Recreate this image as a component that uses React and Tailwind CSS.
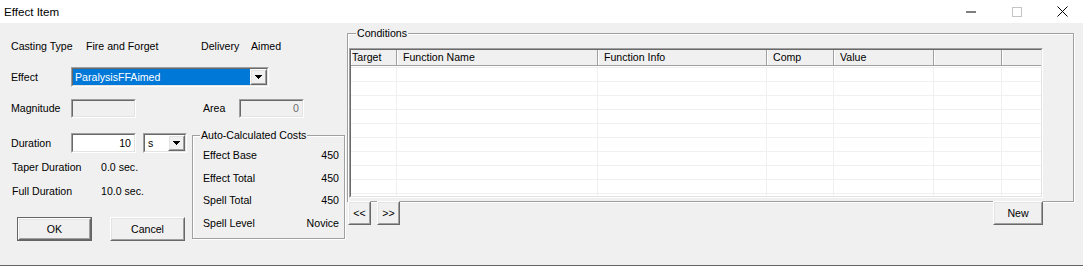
import React from "react";

const sunkenOuter = "border border-t-[#a0a0a0] border-l-[#a0a0a0] border-b-white border-r-white";
const sunkenInner = "border border-t-[#696969] border-l-[#696969] border-b-[#e3e3e3] border-r-[#e3e3e3]";
const raisedOuter = "border border-t-white border-l-white border-b-[#696969] border-r-[#696969]";
const raisedInner = "border border-t-[#e3e3e3] border-l-[#e3e3e3] border-b-[#a0a0a0] border-r-[#a0a0a0]";

function Arrow() {
  return (
    <svg width="7" height="4" viewBox="0 0 7 4" shapeRendering="crispEdges">
      <path d="M0 0h7v1h-1v1h-1v1h-1v1h-1v-1h-1v-1h-1v-1h-1z" fill="#000" />
    </svg>
  );
}

function DropBtn() {
  return (
    <div className={`w-[17px] h-full bg-[#f0f0f0] ${raisedOuter}`}>
      <div className={`w-full h-full flex items-center justify-center ${raisedInner}`}>
        <Arrow />
      </div>
    </div>
  );
}

function Sunken({ className = "", innerClass = "", children }) {
  return (
    <div className={`${sunkenOuter} ${className}`}>
      <div className={`w-full h-full ${sunkenInner} ${innerClass}`}>{children}</div>
    </div>
  );
}

function Button({ className = "", children, isDefault }) {
  const btn = (
    <div className={`w-full h-full bg-[#f0f0f0] ${raisedOuter}`}>
      <div className={`w-full h-full flex items-center justify-center ${raisedInner}`}>{children}</div>
    </div>
  );
  if (isDefault) {
    return <div className={`border border-[#646464] ${className}`}>{btn}</div>;
  }
  return <div className={className}>{btn}</div>;
}

function GroupBox({ title, className = "", legendLeft = "left-[7px]", children }) {
  return (
    <div className={`relative border border-[#a0a0a0] shadow-[1px_1px_0_white,inset_1px_1px_0_white] ${className}`}>
      <span className={`absolute top-[-7px] ${legendLeft} bg-[#f0f0f0] px-[1px] leading-[13px]`}>{title}</span>
      {children}
    </div>
  );
}

const cols = "grid grid-cols-[46px_201px_169px_67px_100px_68px_1fr]";

export default function App() {
  const headers = ["Target", "Function Name", "Function Info", "Comp", "Value", "", ""];
  const rows = Array.from({ length: 10 });
  return (
    <div className="w-[1083px] h-[266px] bg-[#f0f0f0] flex flex-col overflow-hidden text-[10.6px] leading-[13px] text-black [font-family:'Liberation_Sans',Arial,sans-serif]">
      {/* Title bar */}
      <div className="h-[23px] bg-white flex items-center shrink-0">
        <span className="ml-[4px] text-[11.6px] leading-[15px] text-black">Effect Item</span>
        <div className="ml-auto mr-[15px] flex items-center gap-[35px]">
          <div className="w-[10px] h-[10px] flex items-center">
            <div className="w-[10px] h-[1px] bg-black translate-y-[0.5px]" />
          </div>
          <div className="w-[10px] h-[10px] border border-[#c4c4c4] ml-[1px]" />
          <svg width="11" height="11" viewBox="0 0 11 11">
            <path d="M0.5 0.5L10.5 10.5M10.5 0.5L0.5 10.5" stroke="#000" strokeWidth="1" />
          </svg>
        </div>
      </div>

      {/* Body */}
      <div className="flex-1 flex border-b border-[#646464]">
        {/* Left panel */}
        <div className="w-[347px] shrink-0 pl-[11px] flex flex-col">
          <div className="mt-[17px] h-[13px] flex items-center">
            <span className="w-[75px]">Casting Type</span>
            <span className="w-[115px]">Fire and Forget</span>
            <span className="w-[50px]">Delivery</span>
            <span>Aimed</span>
          </div>

          <div className="mt-[14px] h-[20px] flex items-center">
            <span className="w-[60px]">Effect</span>
            <Sunken className="w-[198px] h-[20px]" innerClass="flex bg-white">
              <div className="flex-1 bg-[#0078d7] text-white flex items-center pl-[2px]">ParalysisFFAimed</div>
              <DropBtn />
            </Sunken>
          </div>

          <div className="mt-[12px] h-[19px] flex items-center">
            <span className="w-[60px]">Magnitude</span>
            <Sunken className="w-[65px] h-[19px]" innerClass="bg-[#f0f0f0]" />
            <span className="ml-[67px] w-[36px]">Area</span>
            <Sunken className="w-[65px] h-[19px]" innerClass="bg-[#f0f0f0] flex items-center justify-end pr-[3px] text-[#6d6d6d]">
              0
            </Sunken>
          </div>

          <div className="mt-[15px] flex">
            <div className="w-[181px] shrink-0 flex flex-col">
              <div className="h-[20px] flex items-center">
                <span className="w-[60px]">Duration</span>
                <Sunken className="w-[65px] h-[20px]" innerClass="bg-white flex items-center justify-end pr-[3px]">
                  10
                </Sunken>
                <Sunken className="ml-[7px] w-[44px] h-[20px]" innerClass="bg-white flex">
                  <span className="flex-1 flex items-center pl-[3px]">s</span>
                  <DropBtn />
                </Sunken>
              </div>
              <div className="mt-[8px] h-[13px] flex items-center pl-[1px]">
                <span className="w-[89px]">Taper Duration</span>
                <span>0.0 sec.</span>
              </div>
              <div className="mt-[11px] h-[13px] flex items-center pl-[1px]">
                <span className="w-[89px]">Full Duration</span>
                <span>10.0 sec.</span>
              </div>
              <div className="mt-[19px] h-[24px] flex items-center">
                <Button isDefault className="ml-[6px] w-[75px] h-[24px]">OK</Button>
                <Button className="ml-[18px] w-[75px] h-[24px]">Cancel</Button>
              </div>
            </div>

            <GroupBox title="Auto-Calculated Costs" className="mt-[2px] w-[153px] h-[104px]">
              <div className="pt-[8px] pl-[10px] pr-[5px] flex flex-col">
                {[
                  ["Effect Base", "450"],
                  ["Effect Total", "450"],
                  ["Spell Total", "450"],
                  ["Spell Level", "Novice"],
                ].map(([k, v]) => (
                  <div key={k} className="h-[22.7px] flex items-center justify-between">
                    <span>{k}</span>
                    <span>{v}</span>
                  </div>
                ))}
              </div>
            </GroupBox>
          </div>
        </div>

        {/* Right panel */}
        <div className="w-[727px] shrink-0 flex flex-col">
          <GroupBox title="Conditions" legendLeft="left-[8px]" className="mt-[10px] h-[169px]">
            <div className={`mt-[14px] ml-[1px] w-[694px] h-[150px] ${sunkenOuter}`}>
              <div className={`w-full h-full flex flex-col overflow-hidden bg-white ${sunkenInner}`}>
                <div className={`${cols} h-[16px] shrink-0 bg-[#f0f0f0] border-b border-[#a0a0a0]`}>
                  {headers.map((h, i) => (
                    <div
                      key={i}
                      className={`flex items-center border-r border-[#a0a0a0] shadow-[inset_1px_0_0_white] ${i === 0 ? "pl-[1px]" : "pl-[6px]"} ${i === 6 ? "border-r-0" : ""}`}
                    >
                      {h}
                    </div>
                  ))}
                </div>
                <div className="h-[1px] shrink-0 bg-white" />
                {rows.map((_, r) => (
                  <div key={r} className={`${cols} h-[14px] shrink-0 border-t border-[#f0f0f0]`}>
                    {headers.map((_, i) => (
                      <div key={i} className={i === 6 ? "" : "border-r border-[#f0f0f0]"} />
                    ))}
                  </div>
                ))}
              </div>
            </div>
          </GroupBox>
          <div className="relative mt-[-1px] h-[24px] flex items-start">
            <Button className="ml-[1px] w-[23px] h-[24px]">&lt;&lt;</Button>
            <Button className="ml-[6px] w-[23px] h-[24px]">&gt;&gt;</Button>
            <Button className="ml-auto mr-[31px] w-[50px] h-[24px]">New</Button>
          </div>
        </div>
      </div>
    </div>
  );
}
